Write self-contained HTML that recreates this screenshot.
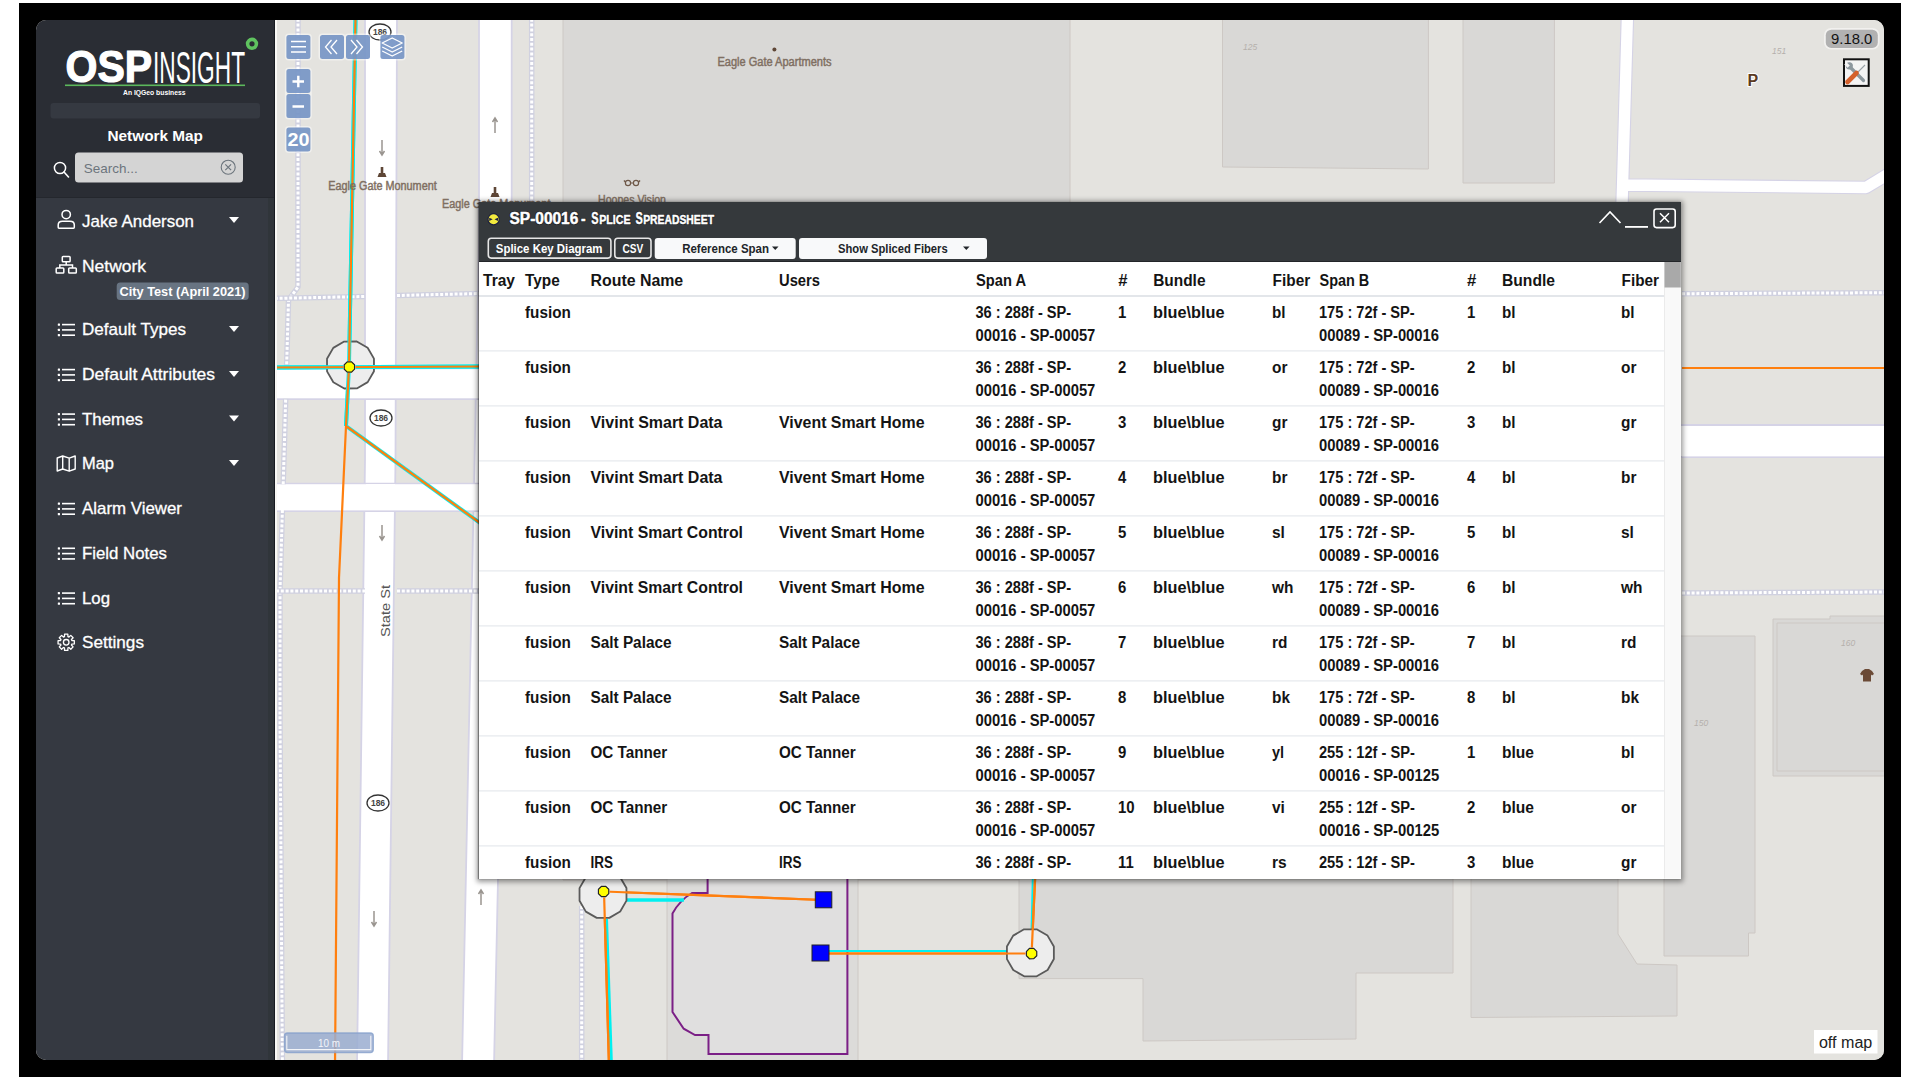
<!DOCTYPE html>
<html><head><meta charset="utf-8">
<style>
*{box-sizing:border-box;margin:0;padding:0}
html,body{width:1920px;height:1080px;overflow:hidden;background:#fff;font-family:"Liberation Sans",sans-serif}
.abs{position:absolute}
#frame{position:absolute;left:19px;top:3px;width:1882px;height:1074px;background:#000}
#app{position:absolute;left:0;top:0;width:1920px;height:1080px;clip-path:inset(20px 36px 20px 36px round 10px);background:#e4e3df}
#sb-top{position:absolute;left:36px;top:20px;width:239px;height:178px;background:#2a2d34;border-bottom:1.5px solid #24272d}
#sb-menu{position:absolute;left:36px;top:198px;width:232px;height:862px;background:#353941}
#sb-strip{position:absolute;left:268px;top:198px;width:6px;height:862px;background:#30353a}
#sb-edge{position:absolute;left:273.8px;top:20px;width:1.6px;height:1040px;background:#171a20}
#sb-white{position:absolute;left:275.4px;top:20px;width:2px;height:1040px;background:#f9f8f5}
.mi{position:absolute;left:82px;color:#fff;font-size:17px;line-height:20px;white-space:nowrap}
.caret{position:absolute;left:229px;width:0;height:0;border-left:5px solid transparent;border-right:5px solid transparent;border-top:6px solid #fff}
.ico{position:absolute}
</style></head><body>
<div id="frame"></div>
<div id="app">
  <svg id="map" class="abs" style="left:0;top:0" width="1920" height="1080" viewBox="0 0 1920 1080">
    <rect x="276" y="20" width="1608" height="1040" fill="#e4e3df"/>
<polygon points="563,14 1070,14 1070,880 563,880" fill="#d9d8d6" stroke="#cdc8c4" stroke-width="1"/>
<polygon points="1222.5,14 1428.4,14 1428.4,169 1222.5,167" fill="#d9d8d6" stroke="#cdc8c4" stroke-width="1"/>
<polygon points="1463,14 1554.4,14 1554.4,183 1463,183" fill="#d9d8d6" stroke="#cdc8c4" stroke-width="1"/>
<polygon points="1664,636 1755,636 1755,933 1748.5,933 1748.5,956 1664,956" fill="#d9d8d6" stroke="#cdc8c4" stroke-width="1"/>
<polygon points="1773,619 1830,619 1830,616 1890,616 1890,776 1773,776" fill="#d9d8d6" stroke="#cdc8c4" stroke-width="1"/>
<polygon points="1777,623 1890,623 1890,771 1777,771" fill="none" stroke="#cdc8c4" stroke-width="1"/>
<polygon points="1019,870 1453,870 1453,973 1356,973 1356,1039 1143,1041 1143,978.6 1019,978.6" fill="#d9d8d6" stroke="#cdc8c4" stroke-width="1"/>
<polygon points="1471,870 1618,870 1618,934 1637,964 1677,965 1677,1016 1471,1017.5" fill="#d9d8d6" stroke="#cdc8c4" stroke-width="1"/>
<polygon points="667,870 858,870 858,1066 667,1066" fill="#dcdbd9" stroke="#cdc8c4" stroke-width="1"/>
<polygon points="365,14 397,14 395.5,460 388,1066 357,1066 365,460" fill="#fff" stroke="#d5d3e6" stroke-width="1.8"/>
<polygon points="479,14 511.7,14 511.7,240 494,1066 462,1066 479,240" fill="#fff" stroke="#d5d3e6" stroke-width="1.8"/>
<polygon points="270,369 480,368 480,399 270,399" fill="#fff" stroke="#d5d3e6" stroke-width="1.8"/>
<polygon points="270,483.7 480,483.7 480,511 270,511" fill="#fff" stroke="#d5d3e6" stroke-width="1.8"/>
<polygon points="1680,425 1890,425 1890,457 1680,457" fill="#fff" stroke="#d5d3e6" stroke-width="1.8"/>
<polygon points="366,370 396,370 395,398 366,398" fill="#fff"/>
<polygon points="366,484 395,484 395,510 366,510" fill="#fff"/>
<path d="M1627.5 14 L1622 205 M1624 185 L1866 187.5 L1890 173" stroke="#d5d3e6" stroke-width="13.5" fill="none" stroke-linejoin="round"/>
<path d="M1627.5 14 L1622 205 M1624 185 L1866 187.5 L1890 173" stroke="#fff" stroke-width="11.3" fill="none" stroke-linejoin="round"/>
<path d="M298 14 L298 287 L288.5 300 L284.5 440 L280 590 L280 720 L282.4 1066" stroke="#d0d1e0" stroke-width="5.5" fill="none" stroke-linejoin="round"/>
<path d="M298 14 L298 287 L288.5 300 L284.5 440 L280 590 L280 720 L282.4 1066" stroke="#fff" stroke-width="3" stroke-dasharray="3 1.8" fill="none" stroke-linejoin="round"/>
<path d="M270 298.5 L365 296.5" stroke="#d0d1e0" stroke-width="5.5" fill="none" stroke-linejoin="round"/>
<path d="M270 298.5 L365 296.5" stroke="#fff" stroke-width="3" stroke-dasharray="3 1.8" fill="none" stroke-linejoin="round"/>
<path d="M397 295.5 L480 293.5" stroke="#d0d1e0" stroke-width="5.5" fill="none" stroke-linejoin="round"/>
<path d="M397 295.5 L480 293.5" stroke="#fff" stroke-width="3" stroke-dasharray="3 1.8" fill="none" stroke-linejoin="round"/>
<path d="M276 591 L365 591" stroke="#d0d1e0" stroke-width="5.5" fill="none" stroke-linejoin="round"/>
<path d="M276 591 L365 591" stroke="#fff" stroke-width="3" stroke-dasharray="3 1.8" fill="none" stroke-linejoin="round"/>
<path d="M397 591 L480 591" stroke="#d0d1e0" stroke-width="5.5" fill="none" stroke-linejoin="round"/>
<path d="M397 591 L480 591" stroke="#fff" stroke-width="3" stroke-dasharray="3 1.8" fill="none" stroke-linejoin="round"/>
<path d="M531.7 14 L531.7 205" stroke="#d0d1e0" stroke-width="5.5" fill="none" stroke-linejoin="round"/>
<path d="M531.7 14 L531.7 205" stroke="#fff" stroke-width="3" stroke-dasharray="3 1.8" fill="none" stroke-linejoin="round"/>
<path d="M581.7 906 L581.7 1066" stroke="#d0d1e0" stroke-width="5.5" fill="none" stroke-linejoin="round"/>
<path d="M581.7 906 L581.7 1066" stroke="#fff" stroke-width="3" stroke-dasharray="3 1.8" fill="none" stroke-linejoin="round"/>
<path d="M1682 293.7 L1890 292.7" stroke="#d0d1e0" stroke-width="5.5" fill="none" stroke-linejoin="round"/>
<path d="M1682 293.7 L1890 292.7" stroke="#fff" stroke-width="3" stroke-dasharray="3 1.8" fill="none" stroke-linejoin="round"/>
<path d="M1682 593 L1890 592" stroke="#d0d1e0" stroke-width="5.5" fill="none" stroke-linejoin="round"/>
<path d="M1682 593 L1890 592" stroke="#fff" stroke-width="3" stroke-dasharray="3 1.8" fill="none" stroke-linejoin="round"/>
<rect x="276" y="369.7" width="204" height="28.6" fill="#fff"/>
<rect x="276" y="484.4" width="204" height="26" fill="#fff"/>
<rect x="1682" y="426" width="208" height="30.4" fill="#fff"/>
<path d="M355.6 14 L349 367" stroke="#00f0f0" stroke-width="3.9000000000000004" fill="none" stroke-linejoin="round"/>
<path d="M355.6 14 L349 367" stroke="#ff7f0e" stroke-width="2.2" fill="none" stroke-linejoin="round"/>
<path d="M270 367.5 L480 366.5" stroke="#00f0f0" stroke-width="3.9000000000000004" fill="none" stroke-linejoin="round"/>
<path d="M270 367.5 L480 366.5" stroke="#ff7f0e" stroke-width="2.2" fill="none" stroke-linejoin="round"/>
<path d="M346 426 L480 523" stroke="#00f0f0" stroke-width="3.9000000000000004" fill="none" stroke-linejoin="round"/>
<path d="M346 426 L480 523" stroke="#ff7f0e" stroke-width="2.2" fill="none" stroke-linejoin="round"/>
<path d="M349 367 L346 426" stroke="#00f0f0" stroke-width="3.9000000000000004" fill="none" stroke-linejoin="round"/>
<path d="M349 367 L346 426" stroke="#ff7f0e" stroke-width="2.2" fill="none" stroke-linejoin="round"/>
<path d="M346 426 L339 578 L335 1066" stroke="#ff7f0e" stroke-width="2.2" fill="none"/>
<path d="M1682 368 L1890 368" stroke="#ff7f0e" stroke-width="2.2" fill="none"/>
<path d="M707.6 870 L707.6 893 L692 893 Q680 900 672.5 913.4 L672.5 1012 L683.7 1028.7 L695 1035 L708.5 1035 L708.5 1054 L847.4 1054 L847.4 870" fill="#e0dfdf" stroke="#7b1f86" stroke-width="2"/>
<path d="M604 900 L684 900" stroke="#00f0f0" stroke-width="3.5"/>
<path d="M606.5 919 L611.5 1066" stroke="#00f0f0" stroke-width="3"/>
<path d="M604 891.5 L609 1066" stroke="#ff7f0e" stroke-width="2.2"/>
<path d="M604 891.5 L823 900" stroke="#ff7f0e" stroke-width="2.2"/>
<path d="M829 951 L1031 951" stroke="#00f0f0" stroke-width="2"/>
<path d="M829 953.5 L1031 953.5" stroke="#ff7f0e" stroke-width="2.2"/>
<path d="M1033 870 L1031 953" stroke="#00f0f0" stroke-width="2"/>
<path d="M1035.5 870 L1031.6 953.6" stroke="#ff7f0e" stroke-width="2.2"/>
<polygon points="373.98,371.25 367.71,382.15 356.83,388.46 344.25,388.48 333.35,382.21 327.04,371.33 327.02,358.75 333.29,347.85 344.17,341.54 356.75,341.52 367.65,347.79 373.96,358.67" fill="#ededed" stroke="#5a5a5a" stroke-width="1.8" stroke-linejoin="round"/>
<path d="M270 367.5 L480 366.5" stroke="#00f0f0" stroke-width="3.9000000000000004" fill="none" stroke-linejoin="round"/>
<path d="M270 367.5 L480 366.5" stroke="#ff7f0e" stroke-width="2.2" fill="none" stroke-linejoin="round"/>
<path d="M355.6 14 L349 367 L346 426" stroke="#00f0f0" stroke-width="3.9000000000000004" fill="none" stroke-linejoin="round"/>
<path d="M355.6 14 L349 367 L346 426" stroke="#ff7f0e" stroke-width="2.2" fill="none" stroke-linejoin="round"/>
<polygon points="355.50,369.51 351.94,373.09 346.89,373.10 343.31,369.54 343.30,364.49 346.86,360.91 351.91,360.90 355.49,364.46" fill="#fff" fill-opacity="0.85"/>
<polygon points="354.58,369.13 351.56,372.17 347.27,372.18 344.23,369.16 344.22,364.87 347.24,361.83 351.53,361.82 354.57,364.84" fill="#ffff00" stroke="#222" stroke-width="1.2"/>
<polygon points="626.48,900.65 620.21,911.55 609.33,917.86 596.75,917.88 585.85,911.61 579.54,900.73 579.52,888.15 585.79,877.25 596.67,870.94 609.25,870.92 620.15,877.19 626.46,888.07" fill="#ededed" stroke="#5a5a5a" stroke-width="1.8" stroke-linejoin="round"/>
<path d="M604 891.5 L823 900 M604 891.5 L609 1066" stroke="#ff7f0e" stroke-width="2.2" fill="none"/>
<polygon points="609.70,894.01 606.14,897.59 601.09,897.60 597.51,894.04 597.50,888.99 601.06,885.41 606.11,885.40 609.69,888.96" fill="#fff" fill-opacity="0.85"/>
<polygon points="608.78,893.63 605.76,896.67 601.47,896.68 598.43,893.66 598.42,889.37 601.44,886.33 605.73,886.32 608.77,889.34" fill="#ffff00" stroke="#222" stroke-width="1.2"/>
<polygon points="1053.88,959.05 1047.61,969.95 1036.73,976.26 1024.15,976.28 1013.25,970.01 1006.94,959.13 1006.92,946.55 1013.19,935.65 1024.07,929.34 1036.65,929.32 1047.55,935.59 1053.86,946.47" fill="#ededed" stroke="#5a5a5a" stroke-width="1.8" stroke-linejoin="round"/>
<path d="M829 953.5 L1031 953.5 M1035.5 870 L1031.6 953.6" stroke="#ff7f0e" stroke-width="2.2" fill="none"/>
<polygon points="1037.70,956.11 1034.14,959.69 1029.09,959.70 1025.51,956.14 1025.50,951.09 1029.06,947.51 1034.11,947.50 1037.69,951.06" fill="#fff" fill-opacity="0.85"/>
<polygon points="1036.78,955.73 1033.76,958.77 1029.47,958.78 1026.43,955.76 1026.42,951.47 1029.44,948.43 1033.73,948.42 1036.77,951.44" fill="#ffff00" stroke="#222" stroke-width="1.2"/>
<rect x="815.3" y="891.8" width="16.5" height="16" fill="#0000ff" stroke="#222" stroke-width="1"/>
<rect x="812" y="945" width="17" height="16" fill="#0000ff" stroke="#222" stroke-width="1"/>
<text x="328.3" y="189.5" font-family="Liberation Sans" font-size="12" font-weight="normal" fill="#7f6f62" textLength="108.4" lengthAdjust="spacingAndGlyphs" stroke="#7f6f62" stroke-width="0.45">Eagle Gate Monument</text>
<text x="442" y="207.5" font-family="Liberation Sans" font-size="12" font-weight="normal" fill="#7f6f62" textLength="108.4" lengthAdjust="spacingAndGlyphs" stroke="#7f6f62" stroke-width="0.45">Eagle Gate Monument</text>
<text x="717.5" y="65.6" font-family="Liberation Sans" font-size="12" font-weight="normal" fill="#7f6f62" textLength="114" lengthAdjust="spacingAndGlyphs" stroke="#7f6f62" stroke-width="0.45">Eagle Gate Apartments</text>
<text x="598" y="204" font-family="Liberation Sans" font-size="12" font-weight="normal" fill="#7f6f62" textLength="68" lengthAdjust="spacingAndGlyphs" stroke="#7f6f62" stroke-width="0.45">Hoopes Vision</text>
<circle cx="774.4" cy="49.5" r="2" fill="#5e4636"/>
<text transform="translate(389.5 637) rotate(-90)" font-family="Liberation Sans" font-size="13.5" fill="#555" textLength="52" lengthAdjust="spacingAndGlyphs">State St</text>
<ellipse cx="380" cy="32" rx="11" ry="8" fill="#fff" stroke="#333" stroke-width="1.3"/>
<text x="380" y="35" text-anchor="middle" font-family="Liberation Sans" font-size="8.5" font-weight="bold" fill="#444">186</text>
<ellipse cx="381" cy="418" rx="11" ry="8" fill="#fff" stroke="#333" stroke-width="1.3"/>
<text x="381" y="421" text-anchor="middle" font-family="Liberation Sans" font-size="8.5" font-weight="bold" fill="#444">186</text>
<ellipse cx="378" cy="803" rx="11" ry="8" fill="#fff" stroke="#333" stroke-width="1.3"/>
<text x="378" y="806" text-anchor="middle" font-family="Liberation Sans" font-size="8.5" font-weight="bold" fill="#444">186</text>
<path d="M382 140 L382 155 M379.5 151 L382 155 L384.5 151" stroke="#9a9590" stroke-width="1.5" fill="none"/>
<path d="M495 118 L495 133 M492.5 122 L495 118 L497.5 122" stroke="#9a9590" stroke-width="1.5" fill="none"/>
<path d="M382 525 L382 540 M379.5 536 L382 540 L384.5 536" stroke="#9a9590" stroke-width="1.5" fill="none"/>
<path d="M481 890 L481 905 M478.5 894 L481 890 L483.5 894" stroke="#9a9590" stroke-width="1.5" fill="none"/>
<path d="M374 911 L374 926 M371.5 922 L374 926 L376.5 922" stroke="#9a9590" stroke-width="1.5" fill="none"/>
<path d="M380.7 167 h2.6 v6 h-2.6 z M379 173 h6 l1.5 4 h-9 z" fill="#5e4636"/>
<path d="M493.7 187 h2.6 v6 h-2.6 z M492 193 h6 l1.5 4 h-9 z" fill="#5e4636"/>
<g fill="none" stroke="#6e5848" stroke-width="1.2"><circle cx="628" cy="183" r="2.6"/><circle cx="636" cy="183" r="2.6"/><path d="M630.6 183 h2.8 M625.4 182 l-1.5 -1.5 M638.6 182 l1.5 -1.5"/></g>
<text x="1747.5" y="86.4" font-family="Liberation Sans" font-size="16" font-weight="bold" fill="#5a3a22" stroke="#fff" stroke-width="2" paint-order="stroke">P</text>
<text x="1243" y="50" font-family="Liberation Sans" font-size="8.5" font-style="italic" fill="#b5b0ac">125</text>
<text x="1772" y="54" font-family="Liberation Sans" font-size="8.5" font-style="italic" fill="#b5b0ac">151</text>
<text x="1841" y="646" font-family="Liberation Sans" font-size="8.5" font-style="italic" fill="#b5b0ac">160</text>
<text x="1694" y="726" font-family="Liberation Sans" font-size="8.5" font-style="italic" fill="#b5b0ac">150</text>
<path d="M1862 671 l3 -2 h4 l3 2 l2 3 l-2 1.5 l-1 -1 v7 h-8 v-7 l-1 1 l-2 -1.5 z" fill="#6b4a36"/>
  </svg>

  <!-- sidebar -->
  <div id="sb-top"></div>
  <div id="sb-menu"></div>
  <div id="sb-strip"></div>
  <div id="sb-edge"></div>
  <div id="sb-white"></div>

  <svg class="abs" style="left:0;top:0" width="1920" height="1080" viewBox="0 0 1920 1080">
    <!-- logo -->
    <text x="65.6" y="82.2" font-family="Liberation Sans" font-weight="bold" font-size="44.7" fill="#fff" stroke="#fff" stroke-width="1.2" textLength="86.5" lengthAdjust="spacingAndGlyphs">OSP</text>
    <text x="153" y="82.5" font-family="Liberation Sans" font-size="44.7" fill="#fff" textLength="92" lengthAdjust="spacingAndGlyphs" style="font-stretch:condensed">INSIGHT</text>
    <rect x="65" y="84.5" width="180" height="1.6" fill="#5cb85c"/>
    <circle cx="252" cy="43.8" r="4.4" fill="#2a2d34" stroke="#5fc35f" stroke-width="3.6"/>
    <text x="123" y="94.5" font-family="Liberation Sans" font-weight="bold" font-size="7.2" fill="#fff" textLength="62.5" lengthAdjust="spacingAndGlyphs">An IQGeo business</text>
    <rect x="50.5" y="103" width="209.5" height="15.5" rx="3" fill="#353941"/>
    <!-- Network Map -->
    <text x="107.5" y="140.6" font-family="Liberation Sans" font-weight="bold" font-size="15" fill="#fff" textLength="95.5" lengthAdjust="spacingAndGlyphs">Network Map</text>
    <!-- search -->
    <circle cx="60" cy="168" r="5.6" fill="none" stroke="#fff" stroke-width="1.5"/>
    <line x1="64" y1="172" x2="68.5" y2="177" stroke="#fff" stroke-width="1.6" stroke-linecap="round"/>
    <rect x="75" y="152.5" width="168" height="30" rx="3.5" fill="#d4d4d4"/>
    <text x="83.8" y="172.6" font-family="Liberation Sans" font-size="13.5" fill="#6c757d" textLength="54" lengthAdjust="spacingAndGlyphs">Search...</text>
    <circle cx="228.2" cy="167.2" r="7" fill="none" stroke="#6c757d" stroke-width="1.1"/>
    <path d="M225.3 164.3 L231.1 170.1 M231.1 164.3 L225.3 170.1" stroke="#6c757d" stroke-width="1.2"/>
    <!-- menu -->
    <g font-family="Liberation Sans" font-size="17" fill="#fff" stroke="#fff" stroke-width="0.3">
      <text x="82" y="227" textLength="112" lengthAdjust="spacingAndGlyphs">Jake Anderson</text>
      <text x="82" y="271.5" textLength="64" lengthAdjust="spacingAndGlyphs">Network</text>
      <text x="82" y="335" textLength="104" lengthAdjust="spacingAndGlyphs">Default Types</text>
      <text x="82" y="380" textLength="133" lengthAdjust="spacingAndGlyphs">Default Attributes</text>
      <text x="82" y="424.5" textLength="61" lengthAdjust="spacingAndGlyphs">Themes</text>
      <text x="82" y="469" textLength="32" lengthAdjust="spacingAndGlyphs">Map</text>
      <text x="82" y="514" textLength="100" lengthAdjust="spacingAndGlyphs">Alarm Viewer</text>
      <text x="82" y="558.7" textLength="85" lengthAdjust="spacingAndGlyphs">Field Notes</text>
      <text x="82" y="603.5" textLength="28" lengthAdjust="spacingAndGlyphs">Log</text>
      <text x="82" y="648" textLength="62" lengthAdjust="spacingAndGlyphs">Settings</text>
    </g>
    <!-- carets -->
    <g fill="#fff">
      <path d="M229 217 L239 217 L234 223 Z"/>
      <path d="M229 326 L239 326 L234 332 Z"/>
      <path d="M229 371 L239 371 L234 377 Z"/>
      <path d="M229 415.5 L239 415.5 L234 421.5 Z"/>
      <path d="M229 460 L239 460 L234 466 Z"/>
    </g>
    <!-- badge -->
    <rect x="116.7" y="282.4" width="132" height="17.6" rx="3.5" fill="#687482"/>
    <text x="119.5" y="296" font-family="Liberation Sans" font-weight="bold" font-size="12.8" fill="#fff" textLength="126" lengthAdjust="spacingAndGlyphs">City Test (April 2021)</text>
    <!-- icons -->
    <g fill="none" stroke="#fff" stroke-width="1.5">
      <circle cx="66.2" cy="214.6" r="4.2"/>
      <path d="M59 228.3 L73.5 228.3 Q74.3 228.3 74.3 227.3 L74.3 225 Q74.3 221.3 70 221.3 L62.5 221.3 Q58.2 221.3 58.2 225 L58.2 227.3 Q58.2 228.3 59 228.3 Z"/>
      <!-- network -->
      <rect x="62.3" y="256.5" width="7.8" height="5.2" rx="0.8"/>
      <path d="M66.2 261.7 V265 M59.8 268 V265 H72.5 V268"/>
      <rect x="56.2" y="268" width="7.6" height="5" rx="0.8"/>
      <rect x="68.7" y="268" width="7.6" height="5" rx="0.8"/>
    </g>
    <g id="listicon" fill="#fff"><rect x="57.8" y="323.5" width="2.2" height="2.2" rx="0.5"/><rect x="62" y="323.8" width="13" height="1.6"/><rect x="57.8" y="328.8" width="2.2" height="2.2" rx="0.5"/><rect x="62" y="329.1" width="13" height="1.6"/><rect x="57.8" y="334.1" width="2.2" height="2.2" rx="0.5"/><rect x="62" y="334.4" width="13" height="1.6"/><rect x="57.8" y="368.5" width="2.2" height="2.2" rx="0.5"/><rect x="62" y="368.8" width="13" height="1.6"/><rect x="57.8" y="373.8" width="2.2" height="2.2" rx="0.5"/><rect x="62" y="374.1" width="13" height="1.6"/><rect x="57.8" y="379.1" width="2.2" height="2.2" rx="0.5"/><rect x="62" y="379.4" width="13" height="1.6"/><rect x="57.8" y="413.0" width="2.2" height="2.2" rx="0.5"/><rect x="62" y="413.3" width="13" height="1.6"/><rect x="57.8" y="418.3" width="2.2" height="2.2" rx="0.5"/><rect x="62" y="418.6" width="13" height="1.6"/><rect x="57.8" y="423.6" width="2.2" height="2.2" rx="0.5"/><rect x="62" y="423.9" width="13" height="1.6"/><rect x="57.8" y="502.5" width="2.2" height="2.2" rx="0.5"/><rect x="62" y="502.8" width="13" height="1.6"/><rect x="57.8" y="507.8" width="2.2" height="2.2" rx="0.5"/><rect x="62" y="508.1" width="13" height="1.6"/><rect x="57.8" y="513.1" width="2.2" height="2.2" rx="0.5"/><rect x="62" y="513.4" width="13" height="1.6"/><rect x="57.8" y="547.2" width="2.2" height="2.2" rx="0.5"/><rect x="62" y="547.5" width="13" height="1.6"/><rect x="57.8" y="552.5" width="2.2" height="2.2" rx="0.5"/><rect x="62" y="552.8" width="13" height="1.6"/><rect x="57.8" y="557.8" width="2.2" height="2.2" rx="0.5"/><rect x="62" y="558.1" width="13" height="1.6"/><rect x="57.8" y="592.0" width="2.2" height="2.2" rx="0.5"/><rect x="62" y="592.3" width="13" height="1.6"/><rect x="57.8" y="597.3" width="2.2" height="2.2" rx="0.5"/><rect x="62" y="597.6" width="13" height="1.6"/><rect x="57.8" y="602.6" width="2.2" height="2.2" rx="0.5"/><rect x="62" y="602.9" width="13" height="1.6"/></g>
  </svg>
<div class="abs" style="left:478.6px;top:202px;width:1202.2px;height:676.5px;background:#fff;box-shadow:-1px 0 1px rgba(0,0,0,0.35),0 1px 5px 2px rgba(0,0,0,0.4)"></div>
<div class="abs" style="left:478.6px;top:202px;width:1202.2px;height:60px;background:#35393c;border-bottom:1px solid #222528"></div>
<svg class="abs" style="left:0;top:0" width="1920" height="1080" viewBox="0 0 1920 1080">
<circle cx="493.6" cy="219.3" r="5.6" fill="#f3ea3e" stroke="#1d2040" stroke-width="1.2"/>
<path d="M489.2 217.7 L492.7 219.3 L489.2 220.9 Z M498 217.7 L494.5 219.3 L498 220.9 Z" fill="#1d2040"/>
<g font-family="Liberation Sans" font-weight="bold" fill="#1e2124" stroke="#1e2124" stroke-width="2.2" stroke-linejoin="round" opacity="0.8"><text x="509.5" y="224.2" font-size="16" textLength="68.8" lengthAdjust="spacingAndGlyphs">SP-00016</text><text x="580.9" y="224.2" font-size="16" textLength="4.6" lengthAdjust="spacingAndGlyphs">-</text><text x="591.3" y="224.2" font-size="16" textLength="7.3" lengthAdjust="spacingAndGlyphs">S</text><text x="599.2" y="224.2" font-size="12.8" textLength="31.3" lengthAdjust="spacingAndGlyphs">PLICE</text><text x="635.4" y="224.2" font-size="16" textLength="7.3" lengthAdjust="spacingAndGlyphs">S</text><text x="643.2" y="224.2" font-size="12.8" textLength="70.8" lengthAdjust="spacingAndGlyphs">PREADSHEET</text></g>
<g font-family="Liberation Sans" font-weight="bold" fill="#fff" stroke="#fff" stroke-width="0.45"><text x="509.5" y="224.2" font-size="16" textLength="68.8" lengthAdjust="spacingAndGlyphs">SP-00016</text><text x="580.9" y="224.2" font-size="16" textLength="4.6" lengthAdjust="spacingAndGlyphs">-</text><text x="591.3" y="224.2" font-size="16" textLength="7.3" lengthAdjust="spacingAndGlyphs">S</text><text x="599.2" y="224.2" font-size="12.8" textLength="31.3" lengthAdjust="spacingAndGlyphs">PLICE</text><text x="635.4" y="224.2" font-size="16" textLength="7.3" lengthAdjust="spacingAndGlyphs">S</text><text x="643.2" y="224.2" font-size="12.8" textLength="70.8" lengthAdjust="spacingAndGlyphs">PREADSHEET</text></g>
<path d="M1599.5 223 L1610 212 L1620.5 223" stroke="#fff" stroke-width="1.6" fill="none"/>
<rect x="1625" y="226" width="23" height="1.8" fill="#fff"/>
<rect x="1654" y="209" width="21.2" height="18.6" rx="2.5" fill="none" stroke="#fff" stroke-width="1.6"/>
<path d="M1660 213.3 L1669 222.3 M1669 213.3 L1660 222.3" stroke="#fff" stroke-width="1.5"/>
<rect x="488.3" y="238.3" width="122.6" height="19.8" rx="3" fill="#35393c" stroke="#e6e6e6" stroke-width="1.6"/>
<text x="495.8" y="252.6" font-family="Liberation Sans" font-weight="bold" font-size="12.6" fill="#fff" textLength="106.7" lengthAdjust="spacingAndGlyphs">Splice Key Diagram</text>
<rect x="614.8" y="238.3" width="36.2" height="19.8" rx="3" fill="#35393c" stroke="#e6e6e6" stroke-width="1.6"/>
<text x="622.5" y="252.6" font-family="Liberation Sans" font-weight="bold" font-size="12.6" fill="#fff" textLength="20.8" lengthAdjust="spacingAndGlyphs">CSV</text>
<rect x="654.7" y="238" width="141" height="21" rx="3" fill="#f8f9fa"/>
<text x="682.2" y="252.6" font-family="Liberation Sans" font-weight="bold" font-size="12.6" fill="#212529" textLength="86.8" lengthAdjust="spacingAndGlyphs">Reference Span</text>
<path d="M772 246.5 h6.5 l-3.25 3.5 z" fill="#212529"/>
<rect x="799" y="238" width="188" height="21" rx="3" fill="#f8f9fa"/>
<text x="838" y="252.6" font-family="Liberation Sans" font-weight="bold" font-size="12.6" fill="#212529" textLength="109.7" lengthAdjust="spacingAndGlyphs">Show Spliced Fibers</text>
<path d="M963 246.5 h6.6 l-3.3 3.5 z" fill="#212529"/>
<g font-family="Liberation Sans" font-weight="bold" font-size="16" fill="#141414">
<text x="483" y="286" textLength="32" lengthAdjust="spacingAndGlyphs">Tray</text>
<text x="525" y="286" textLength="34.7" lengthAdjust="spacingAndGlyphs">Type</text>
<text x="590.5" y="286" textLength="92.7" lengthAdjust="spacingAndGlyphs">Route Name</text>
<text x="779" y="286" textLength="41" lengthAdjust="spacingAndGlyphs">Users</text>
<text x="976" y="286" textLength="50" lengthAdjust="spacingAndGlyphs">Span A</text>
<text x="1118.2" y="286" textLength="9.3" lengthAdjust="spacingAndGlyphs">#</text>
<text x="1153.2" y="286" textLength="52.3" lengthAdjust="spacingAndGlyphs">Bundle</text>
<text x="1272.6" y="286" textLength="37.6" lengthAdjust="spacingAndGlyphs">Fiber</text>
<text x="1319.5" y="286" textLength="49.8" lengthAdjust="spacingAndGlyphs">Span B</text>
<text x="1467" y="286" textLength="9.3" lengthAdjust="spacingAndGlyphs">#</text>
<text x="1502" y="286" textLength="53" lengthAdjust="spacingAndGlyphs">Bundle</text>
<text x="1621.6" y="286" textLength="37.5" lengthAdjust="spacingAndGlyphs">Fiber</text>
</g>
<rect x="479" y="295" width="1185" height="2" fill="#e3e6ea"/>
<g font-family="Liberation Sans" font-weight="bold" font-size="16" fill="#141414">
<text x="525" y="318.3" textLength="45.8" lengthAdjust="spacingAndGlyphs">fusion</text>
<text x="975.5" y="318.3" textLength="95.7" lengthAdjust="spacingAndGlyphs">36 : 288f - SP-</text>
<text x="975.5" y="340.8" textLength="119.8" lengthAdjust="spacingAndGlyphs">00016 - SP-00057</text>
<text x="1118" y="318.3" textLength="8.3" lengthAdjust="spacingAndGlyphs">1</text>
<text x="1153" y="318.3" textLength="71.5" lengthAdjust="spacingAndGlyphs">blue\blue</text>
<text x="1272" y="318.3" textLength="13.5" lengthAdjust="spacingAndGlyphs">bl</text>
<text x="1319" y="318.3" textLength="95.7" lengthAdjust="spacingAndGlyphs">175 : 72f - SP-</text>
<text x="1319" y="340.8" textLength="120.0" lengthAdjust="spacingAndGlyphs">00089 - SP-00016</text>
<text x="1467" y="318.3" textLength="8.3" lengthAdjust="spacingAndGlyphs">1</text>
<text x="1502" y="318.3" textLength="13.5" lengthAdjust="spacingAndGlyphs">bl</text>
<text x="1621" y="318.3" textLength="13.5" lengthAdjust="spacingAndGlyphs">bl</text>
<rect x="479" y="350.3" width="1185" height="1.2" fill="#e6e9ed"/>
<text x="525" y="373.3" textLength="45.8" lengthAdjust="spacingAndGlyphs">fusion</text>
<text x="975.5" y="373.3" textLength="95.7" lengthAdjust="spacingAndGlyphs">36 : 288f - SP-</text>
<text x="975.5" y="395.8" textLength="119.8" lengthAdjust="spacingAndGlyphs">00016 - SP-00057</text>
<text x="1118" y="373.3" textLength="8.3" lengthAdjust="spacingAndGlyphs">2</text>
<text x="1153" y="373.3" textLength="71.5" lengthAdjust="spacingAndGlyphs">blue\blue</text>
<text x="1272" y="373.3" textLength="15.4" lengthAdjust="spacingAndGlyphs">or</text>
<text x="1319" y="373.3" textLength="95.7" lengthAdjust="spacingAndGlyphs">175 : 72f - SP-</text>
<text x="1319" y="395.8" textLength="120.0" lengthAdjust="spacingAndGlyphs">00089 - SP-00016</text>
<text x="1467" y="373.3" textLength="8.3" lengthAdjust="spacingAndGlyphs">2</text>
<text x="1502" y="373.3" textLength="13.5" lengthAdjust="spacingAndGlyphs">bl</text>
<text x="1621" y="373.3" textLength="15.4" lengthAdjust="spacingAndGlyphs">or</text>
<rect x="479" y="405.3" width="1185" height="1.2" fill="#e6e9ed"/>
<text x="525" y="428.3" textLength="45.8" lengthAdjust="spacingAndGlyphs">fusion</text>
<text x="590.5" y="428.3" textLength="132.0" lengthAdjust="spacingAndGlyphs">Vivint Smart Data</text>
<text x="779" y="428.3" textLength="145.5" lengthAdjust="spacingAndGlyphs">Vivent Smart Home</text>
<text x="975.5" y="428.3" textLength="95.7" lengthAdjust="spacingAndGlyphs">36 : 288f - SP-</text>
<text x="975.5" y="450.8" textLength="119.8" lengthAdjust="spacingAndGlyphs">00016 - SP-00057</text>
<text x="1118" y="428.3" textLength="8.3" lengthAdjust="spacingAndGlyphs">3</text>
<text x="1153" y="428.3" textLength="71.5" lengthAdjust="spacingAndGlyphs">blue\blue</text>
<text x="1272" y="428.3" textLength="15.4" lengthAdjust="spacingAndGlyphs">gr</text>
<text x="1319" y="428.3" textLength="95.7" lengthAdjust="spacingAndGlyphs">175 : 72f - SP-</text>
<text x="1319" y="450.8" textLength="120.0" lengthAdjust="spacingAndGlyphs">00089 - SP-00016</text>
<text x="1467" y="428.3" textLength="8.3" lengthAdjust="spacingAndGlyphs">3</text>
<text x="1502" y="428.3" textLength="13.5" lengthAdjust="spacingAndGlyphs">bl</text>
<text x="1621" y="428.3" textLength="15.4" lengthAdjust="spacingAndGlyphs">gr</text>
<rect x="479" y="460.3" width="1185" height="1.2" fill="#e6e9ed"/>
<text x="525" y="483.3" textLength="45.8" lengthAdjust="spacingAndGlyphs">fusion</text>
<text x="590.5" y="483.3" textLength="132.0" lengthAdjust="spacingAndGlyphs">Vivint Smart Data</text>
<text x="779" y="483.3" textLength="145.5" lengthAdjust="spacingAndGlyphs">Vivent Smart Home</text>
<text x="975.5" y="483.3" textLength="95.7" lengthAdjust="spacingAndGlyphs">36 : 288f - SP-</text>
<text x="975.5" y="505.8" textLength="119.8" lengthAdjust="spacingAndGlyphs">00016 - SP-00057</text>
<text x="1118" y="483.3" textLength="8.3" lengthAdjust="spacingAndGlyphs">4</text>
<text x="1153" y="483.3" textLength="71.5" lengthAdjust="spacingAndGlyphs">blue\blue</text>
<text x="1272" y="483.3" textLength="15.4" lengthAdjust="spacingAndGlyphs">br</text>
<text x="1319" y="483.3" textLength="95.7" lengthAdjust="spacingAndGlyphs">175 : 72f - SP-</text>
<text x="1319" y="505.8" textLength="120.0" lengthAdjust="spacingAndGlyphs">00089 - SP-00016</text>
<text x="1467" y="483.3" textLength="8.3" lengthAdjust="spacingAndGlyphs">4</text>
<text x="1502" y="483.3" textLength="13.5" lengthAdjust="spacingAndGlyphs">bl</text>
<text x="1621" y="483.3" textLength="15.4" lengthAdjust="spacingAndGlyphs">br</text>
<rect x="479" y="515.3" width="1185" height="1.2" fill="#e6e9ed"/>
<text x="525" y="538.3" textLength="45.8" lengthAdjust="spacingAndGlyphs">fusion</text>
<text x="590.5" y="538.3" textLength="152.5" lengthAdjust="spacingAndGlyphs">Vivint Smart Control</text>
<text x="779" y="538.3" textLength="145.5" lengthAdjust="spacingAndGlyphs">Vivent Smart Home</text>
<text x="975.5" y="538.3" textLength="95.7" lengthAdjust="spacingAndGlyphs">36 : 288f - SP-</text>
<text x="975.5" y="560.8" textLength="119.8" lengthAdjust="spacingAndGlyphs">00016 - SP-00057</text>
<text x="1118" y="538.3" textLength="8.3" lengthAdjust="spacingAndGlyphs">5</text>
<text x="1153" y="538.3" textLength="71.5" lengthAdjust="spacingAndGlyphs">blue\blue</text>
<text x="1272" y="538.3" textLength="12.9" lengthAdjust="spacingAndGlyphs">sl</text>
<text x="1319" y="538.3" textLength="95.7" lengthAdjust="spacingAndGlyphs">175 : 72f - SP-</text>
<text x="1319" y="560.8" textLength="120.0" lengthAdjust="spacingAndGlyphs">00089 - SP-00016</text>
<text x="1467" y="538.3" textLength="8.3" lengthAdjust="spacingAndGlyphs">5</text>
<text x="1502" y="538.3" textLength="13.5" lengthAdjust="spacingAndGlyphs">bl</text>
<text x="1621" y="538.3" textLength="12.9" lengthAdjust="spacingAndGlyphs">sl</text>
<rect x="479" y="570.3" width="1185" height="1.2" fill="#e6e9ed"/>
<text x="525" y="593.3" textLength="45.8" lengthAdjust="spacingAndGlyphs">fusion</text>
<text x="590.5" y="593.3" textLength="152.5" lengthAdjust="spacingAndGlyphs">Vivint Smart Control</text>
<text x="779" y="593.3" textLength="145.5" lengthAdjust="spacingAndGlyphs">Vivent Smart Home</text>
<text x="975.5" y="593.3" textLength="95.7" lengthAdjust="spacingAndGlyphs">36 : 288f - SP-</text>
<text x="975.5" y="615.8" textLength="119.8" lengthAdjust="spacingAndGlyphs">00016 - SP-00057</text>
<text x="1118" y="593.3" textLength="8.3" lengthAdjust="spacingAndGlyphs">6</text>
<text x="1153" y="593.3" textLength="71.5" lengthAdjust="spacingAndGlyphs">blue\blue</text>
<text x="1272" y="593.3" textLength="21.4" lengthAdjust="spacingAndGlyphs">wh</text>
<text x="1319" y="593.3" textLength="95.7" lengthAdjust="spacingAndGlyphs">175 : 72f - SP-</text>
<text x="1319" y="615.8" textLength="120.0" lengthAdjust="spacingAndGlyphs">00089 - SP-00016</text>
<text x="1467" y="593.3" textLength="8.3" lengthAdjust="spacingAndGlyphs">6</text>
<text x="1502" y="593.3" textLength="13.5" lengthAdjust="spacingAndGlyphs">bl</text>
<text x="1621" y="593.3" textLength="21.4" lengthAdjust="spacingAndGlyphs">wh</text>
<rect x="479" y="625.3" width="1185" height="1.2" fill="#e6e9ed"/>
<text x="525" y="648.3" textLength="45.8" lengthAdjust="spacingAndGlyphs">fusion</text>
<text x="590.5" y="648.3" textLength="81.0" lengthAdjust="spacingAndGlyphs">Salt Palace</text>
<text x="779" y="648.3" textLength="81.0" lengthAdjust="spacingAndGlyphs">Salt Palace</text>
<text x="975.5" y="648.3" textLength="95.7" lengthAdjust="spacingAndGlyphs">36 : 288f - SP-</text>
<text x="975.5" y="670.8" textLength="119.8" lengthAdjust="spacingAndGlyphs">00016 - SP-00057</text>
<text x="1118" y="648.3" textLength="8.3" lengthAdjust="spacingAndGlyphs">7</text>
<text x="1153" y="648.3" textLength="71.5" lengthAdjust="spacingAndGlyphs">blue\blue</text>
<text x="1272" y="648.3" textLength="15.4" lengthAdjust="spacingAndGlyphs">rd</text>
<text x="1319" y="648.3" textLength="95.7" lengthAdjust="spacingAndGlyphs">175 : 72f - SP-</text>
<text x="1319" y="670.8" textLength="120.0" lengthAdjust="spacingAndGlyphs">00089 - SP-00016</text>
<text x="1467" y="648.3" textLength="8.3" lengthAdjust="spacingAndGlyphs">7</text>
<text x="1502" y="648.3" textLength="13.5" lengthAdjust="spacingAndGlyphs">bl</text>
<text x="1621" y="648.3" textLength="15.4" lengthAdjust="spacingAndGlyphs">rd</text>
<rect x="479" y="680.3" width="1185" height="1.2" fill="#e6e9ed"/>
<text x="525" y="703.3" textLength="45.8" lengthAdjust="spacingAndGlyphs">fusion</text>
<text x="590.5" y="703.3" textLength="81.0" lengthAdjust="spacingAndGlyphs">Salt Palace</text>
<text x="779" y="703.3" textLength="81.0" lengthAdjust="spacingAndGlyphs">Salt Palace</text>
<text x="975.5" y="703.3" textLength="95.7" lengthAdjust="spacingAndGlyphs">36 : 288f - SP-</text>
<text x="975.5" y="725.8" textLength="119.8" lengthAdjust="spacingAndGlyphs">00016 - SP-00057</text>
<text x="1118" y="703.3" textLength="8.3" lengthAdjust="spacingAndGlyphs">8</text>
<text x="1153" y="703.3" textLength="71.5" lengthAdjust="spacingAndGlyphs">blue\blue</text>
<text x="1272" y="703.3" textLength="18.0" lengthAdjust="spacingAndGlyphs">bk</text>
<text x="1319" y="703.3" textLength="95.7" lengthAdjust="spacingAndGlyphs">175 : 72f - SP-</text>
<text x="1319" y="725.8" textLength="120.0" lengthAdjust="spacingAndGlyphs">00089 - SP-00016</text>
<text x="1467" y="703.3" textLength="8.3" lengthAdjust="spacingAndGlyphs">8</text>
<text x="1502" y="703.3" textLength="13.5" lengthAdjust="spacingAndGlyphs">bl</text>
<text x="1621" y="703.3" textLength="18.0" lengthAdjust="spacingAndGlyphs">bk</text>
<rect x="479" y="735.3" width="1185" height="1.2" fill="#e6e9ed"/>
<text x="525" y="758.3" textLength="45.8" lengthAdjust="spacingAndGlyphs">fusion</text>
<text x="590.5" y="758.3" textLength="76.7" lengthAdjust="spacingAndGlyphs">OC Tanner</text>
<text x="779" y="758.3" textLength="76.7" lengthAdjust="spacingAndGlyphs">OC Tanner</text>
<text x="975.5" y="758.3" textLength="95.7" lengthAdjust="spacingAndGlyphs">36 : 288f - SP-</text>
<text x="975.5" y="780.8" textLength="119.8" lengthAdjust="spacingAndGlyphs">00016 - SP-00057</text>
<text x="1118" y="758.3" textLength="8.3" lengthAdjust="spacingAndGlyphs">9</text>
<text x="1153" y="758.3" textLength="71.5" lengthAdjust="spacingAndGlyphs">blue\blue</text>
<text x="1272" y="758.3" textLength="12.1" lengthAdjust="spacingAndGlyphs">yl</text>
<text x="1319" y="758.3" textLength="95.8" lengthAdjust="spacingAndGlyphs">255 : 12f - SP-</text>
<text x="1319" y="780.8" textLength="120.2" lengthAdjust="spacingAndGlyphs">00016 - SP-00125</text>
<text x="1467" y="758.3" textLength="8.3" lengthAdjust="spacingAndGlyphs">1</text>
<text x="1502" y="758.3" textLength="32.0" lengthAdjust="spacingAndGlyphs">blue</text>
<text x="1621" y="758.3" textLength="13.5" lengthAdjust="spacingAndGlyphs">bl</text>
<rect x="479" y="790.3" width="1185" height="1.2" fill="#e6e9ed"/>
<text x="525" y="813.3" textLength="45.8" lengthAdjust="spacingAndGlyphs">fusion</text>
<text x="590.5" y="813.3" textLength="76.7" lengthAdjust="spacingAndGlyphs">OC Tanner</text>
<text x="779" y="813.3" textLength="76.7" lengthAdjust="spacingAndGlyphs">OC Tanner</text>
<text x="975.5" y="813.3" textLength="95.7" lengthAdjust="spacingAndGlyphs">36 : 288f - SP-</text>
<text x="975.5" y="835.8" textLength="119.8" lengthAdjust="spacingAndGlyphs">00016 - SP-00057</text>
<text x="1118" y="813.3" textLength="16.6" lengthAdjust="spacingAndGlyphs">10</text>
<text x="1153" y="813.3" textLength="71.5" lengthAdjust="spacingAndGlyphs">blue\blue</text>
<text x="1272" y="813.3" textLength="12.9" lengthAdjust="spacingAndGlyphs">vi</text>
<text x="1319" y="813.3" textLength="95.8" lengthAdjust="spacingAndGlyphs">255 : 12f - SP-</text>
<text x="1319" y="835.8" textLength="120.2" lengthAdjust="spacingAndGlyphs">00016 - SP-00125</text>
<text x="1467" y="813.3" textLength="8.3" lengthAdjust="spacingAndGlyphs">2</text>
<text x="1502" y="813.3" textLength="32.0" lengthAdjust="spacingAndGlyphs">blue</text>
<text x="1621" y="813.3" textLength="15.4" lengthAdjust="spacingAndGlyphs">or</text>
<rect x="479" y="845.3" width="1185" height="1.2" fill="#e6e9ed"/>
<text x="525" y="868.3" textLength="45.8" lengthAdjust="spacingAndGlyphs">fusion</text>
<text x="590.5" y="868.3" textLength="22.5" lengthAdjust="spacingAndGlyphs">IRS</text>
<text x="779" y="868.3" textLength="22.5" lengthAdjust="spacingAndGlyphs">IRS</text>
<text x="975.5" y="868.3" textLength="95.7" lengthAdjust="spacingAndGlyphs">36 : 288f - SP-</text>
<text x="1118" y="868.3" textLength="15.7" lengthAdjust="spacingAndGlyphs">11</text>
<text x="1153" y="868.3" textLength="71.5" lengthAdjust="spacingAndGlyphs">blue\blue</text>
<text x="1272" y="868.3" textLength="14.6" lengthAdjust="spacingAndGlyphs">rs</text>
<text x="1319" y="868.3" textLength="95.8" lengthAdjust="spacingAndGlyphs">255 : 12f - SP-</text>
<text x="1467" y="868.3" textLength="8.3" lengthAdjust="spacingAndGlyphs">3</text>
<text x="1502" y="868.3" textLength="32.0" lengthAdjust="spacingAndGlyphs">blue</text>
<text x="1621" y="868.3" textLength="15.4" lengthAdjust="spacingAndGlyphs">gr</text>
</g>
<rect x="1664" y="262" width="16.8" height="616.5" fill="#f9f9f9"/>
<rect x="1664" y="262" width="0.8" height="616.5" fill="#e8e8e8"/>
<rect x="1664.5" y="262" width="16.3" height="25.5" fill="#a9a9a9"/>
</svg>
<svg class="abs" style="left:0;top:0" width="1920" height="1080" viewBox="0 0 1920 1080">
<rect x="284.9" y="33.5" width="27" height="27" rx="4" fill="#fff" fill-opacity="0.45"/>
<rect x="286.4" y="35" width="24" height="24" rx="2.5" fill="#6f8fc3" fill-opacity="0.88"/>
<path d="M291 41.5 h15 M291 46.8 h15 M291 52 h15" stroke="#fff" stroke-width="1.6"/>
<rect x="318.5" y="33.5" width="27" height="27" rx="4" fill="#fff" fill-opacity="0.45"/>
<rect x="320" y="35" width="24" height="24" rx="2.5" fill="#6f8fc3" fill-opacity="0.88"/>
<rect x="344.5" y="33.5" width="27" height="27" rx="4" fill="#fff" fill-opacity="0.45"/>
<rect x="346" y="35" width="24" height="24" rx="2.5" fill="#6f8fc3" fill-opacity="0.88"/>
<path d="M331.5 40 l-6 7 l6 7 M337 40 l-6 7 l6 7" stroke="#fff" stroke-width="1.3" fill="none"/>
<path d="M351 40 l6 7 l-6 7 M356.5 40 l6 7 l-6 7" stroke="#fff" stroke-width="1.3" fill="none"/>
<rect x="378.9" y="33.5" width="27" height="27" rx="4" fill="#fff" fill-opacity="0.45"/>
<rect x="380.4" y="35" width="24" height="24" rx="2.5" fill="#6f8fc3" fill-opacity="0.88"/>
<g fill="none" stroke="#fff" stroke-width="1.3" stroke-linejoin="round"><path d="M392.2 38 l10 5 l-10 5 l-10 -5 z"/><path d="M382.2 47 l10 5 l10 -5"/><path d="M382.2 51 l10 5 l10 -5"/></g>
<rect x="284.9" y="67.5" width="27" height="52" rx="4" fill="#fff" fill-opacity="0.45"/>
<rect x="286.4" y="69" width="24" height="24" rx="2.5" fill="#6f8fc3" fill-opacity="0.88"/>
<rect x="286.4" y="94" width="24" height="24" rx="2.5" fill="#6f8fc3" fill-opacity="0.88"/>
<path d="M292.5 81.5 h11.5 M298.3 75.8 v11.5" stroke="#fff" stroke-width="2.4"/>
<path d="M292.5 106.5 h11.5" stroke="#fff" stroke-width="2.4"/>
<rect x="284.9" y="126.1" width="27" height="27" rx="4" fill="#fff" fill-opacity="0.45"/>
<rect x="286.4" y="127.6" width="24" height="24" rx="2.5" fill="#6f8fc3" fill-opacity="0.88"/>
<text x="298.4" y="146.3" text-anchor="middle" font-family="Liberation Sans" font-weight="bold" font-size="18" fill="#fff" textLength="22" lengthAdjust="spacingAndGlyphs">20</text>
<rect x="1824" y="28" width="55.5" height="21.5" rx="7" fill="#fff" fill-opacity="0.5"/>
<rect x="1825.8" y="29.7" width="52" height="18.2" rx="5.5" fill="#b1b1b1"/>
<text x="1831" y="44.4" font-family="Liberation Sans" font-size="15" fill="#111" textLength="41.3" lengthAdjust="spacingAndGlyphs">9.18.0</text>
<rect x="1844" y="59.3" width="24.7" height="26.6" fill="#f4f4f4" stroke="#111" stroke-width="2"/>
<path d="M1850.5 67.5 L1863.5 80.5" stroke="#8d989e" stroke-width="3.2" stroke-linecap="round"/>
<circle cx="1849.3" cy="65.8" r="3.6" fill="#8d989e"/>
<path d="M1846.5 62.3 L1849.8 65.6 L1847.6 67.8 L1844.3 64.5 Z" fill="#f4f4f4"/>
<path d="M1856.5 73.5 L1865 65" stroke="#9aa3a8" stroke-width="1.1"/>
<path d="M1847.5 82 L1856.5 73" stroke="#d4612c" stroke-width="4.6" stroke-linecap="round"/>
<rect x="1814" y="1030" width="63.5" height="23.5" fill="#fff"/>
<text x="1818.9" y="1047.5" font-family="Liberation Sans" font-size="16" fill="#222" textLength="53.4" lengthAdjust="spacingAndGlyphs">off map</text>
<rect x="284.5" y="1033" width="88.8" height="19.6" rx="3" fill="#9aadd0" fill-opacity="0.85" stroke="#86a0cc" stroke-opacity="0.8" stroke-width="1.3"/>
<path d="M286.8 1035.8 V1049.6 H370.8 V1035.8" fill="none" stroke="#f2f4f8" stroke-width="1.1"/>
<text x="329" y="1047" text-anchor="middle" font-family="Liberation Sans" font-size="11" fill="#f4f6fa" textLength="22" lengthAdjust="spacingAndGlyphs">10 m</text>
<path d="M57.2 458 l5.5 -2 l6.5 2.2 l6 -2.2 v13 l-6 2.2 l-6.5 -2.2 l-5.5 2 z M62.7 456 v13 M69.2 458.2 v13" fill="none" stroke="#fff" stroke-width="1.4" stroke-linejoin="round"/>
<path d="M71.84 640.56 L74.33 640.65 L74.33 643.95 L71.84 644.04 L71.42 645.05 L73.12 646.89 L70.79 649.22 L68.95 647.52 L67.94 647.94 L67.85 650.43 L64.55 650.43 L64.46 647.94 L63.45 647.52 L61.61 649.22 L59.28 646.89 L60.98 645.05 L60.56 644.04 L58.07 643.95 L58.07 640.65 L60.56 640.56 L60.98 639.55 L59.28 637.71 L61.61 635.38 L63.45 637.08 L64.46 636.66 L64.55 634.17 L67.85 634.17 L67.94 636.66 L68.95 637.08 L70.79 635.38 L73.12 637.71 L71.42 639.55 Z" fill="none" stroke="#fff" stroke-width="1.3" stroke-linejoin="round"/>
<circle cx="66.2" cy="642.3" r="2.8" fill="none" stroke="#fff" stroke-width="1.3"/>
</svg>
</div>
</body></html>
